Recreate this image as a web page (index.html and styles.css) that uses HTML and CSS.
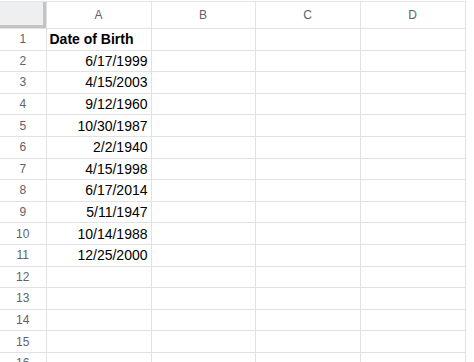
FILE: index.html
```html
<!DOCTYPE html>
<html>
<head>
  <title>Date of Birth - Sheet</title>
  <link rel="stylesheet" href="styles.css">
</head>
<body>
  <table class="sheet">
    <colgroup>
      <col class="col-rowhead">
      <col class="col-a">
      <col class="col-b">
      <col class="col-c">
      <col class="col-d">
    </colgroup>
    <thead>
      <tr class="head-row">
        <th class="corner"></th>
        <th>A</th>
        <th>B</th>
        <th>C</th>
        <th>D</th>
      </tr>
    </thead>
    <tbody>
      <tr><th>1</th><td class="title">Date of Birth</td><td></td><td></td><td></td></tr>
      <tr><th>2</th><td class="num">6/17/1999</td><td></td><td></td><td></td></tr>
      <tr><th>3</th><td class="num">4/15/2003</td><td></td><td></td><td></td></tr>
      <tr><th>4</th><td class="num">9/12/1960</td><td></td><td></td><td></td></tr>
      <tr><th>5</th><td class="num">10/30/1987</td><td></td><td></td><td></td></tr>
      <tr><th>6</th><td class="num">2/2/1940</td><td></td><td></td><td></td></tr>
      <tr><th>7</th><td class="num">4/15/1998</td><td></td><td></td><td></td></tr>
      <tr><th>8</th><td class="num">6/17/2014</td><td></td><td></td><td></td></tr>
      <tr><th>9</th><td class="num">5/11/1947</td><td></td><td></td><td></td></tr>
      <tr><th>10</th><td class="num">10/14/1988</td><td></td><td></td><td></td></tr>
      <tr><th>11</th><td class="num">12/25/2000</td><td></td><td></td><td></td></tr>
      <tr><th>12</th><td></td><td></td><td></td><td></td></tr>
      <tr><th>13</th><td></td><td></td><td></td><td></td></tr>
      <tr><th>14</th><td></td><td></td><td></td><td></td></tr>
      <tr><th>15</th><td></td><td></td><td></td><td></td></tr>
      <tr><th>16</th><td></td><td></td><td></td><td></td></tr>
    </tbody>
  </table>
</body>
</html>
```

FILE: styles.css
```css
body {
  margin: 0;
  padding-top: 1px;
  background: #fff;
  font-family: "Liberation Sans", Arial, sans-serif;
}
.sheet {
  border-collapse: collapse;
  table-layout: fixed;
  width: 465px;
}
.col-rowhead { width: 46px; }
.col-a { width: 105px; }
.col-b { width: 104px; }
.col-c { width: 105px; }
.col-d { width: 105px; }

th, td {
  border: 1px solid #e2e2e2;
  padding: 0 3px;
  height: 21.6px;
  box-sizing: border-box;
  white-space: nowrap;
  overflow: hidden;
}
th {
  font-weight: normal;
  font-size: 12px;
  color: #5f6368;
  text-align: center;
  background: #fff;
}
tbody th { border-left: none; }
.head-row th {
  height: 27px;
  border-top: 1px solid #e6e6e6;
}
.corner {
  background: #eeeff0;
  border-left: none;
  box-shadow: inset -3px -3px 0 #c4c4c4;
}
td {
  font-size: 14px;
  color: #000;
}
.num { text-align: right; }
.title { font-weight: bold; }
```
